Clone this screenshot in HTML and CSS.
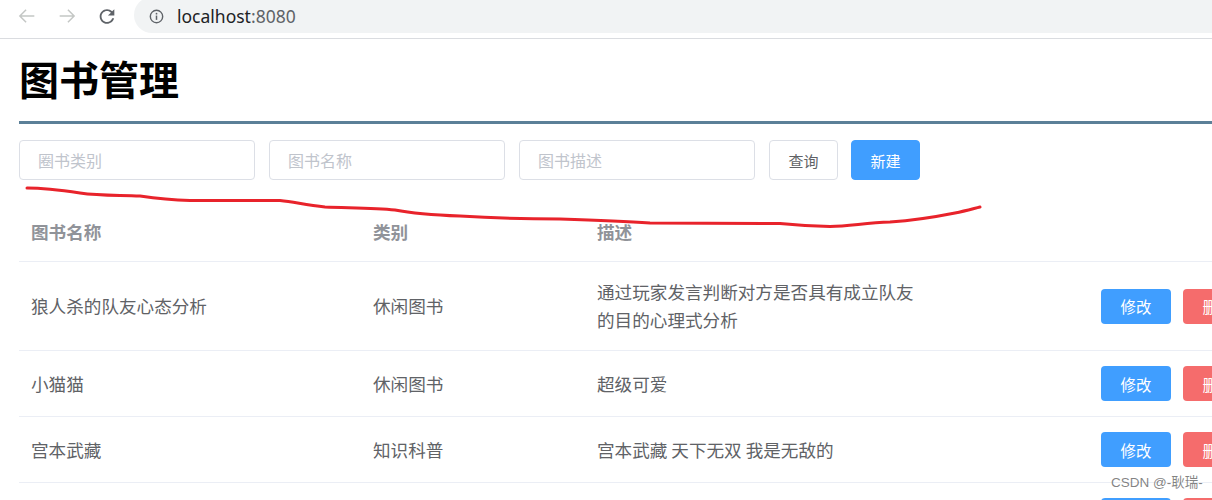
FILE: index.html
```html
<!DOCTYPE html>
<html lang="zh-CN">
<head>
<meta charset="utf-8">
<title>图书管理</title>
<link rel="stylesheet" href="styles.css">
</head>
<body>
<div class="browser-bar">
  <span class="nav-icon disabled">
    <svg viewBox="0 0 24 24" width="22" height="22"><path d="M20 12H4.5M11 5.2L4.2 12l6.8 6.8" fill="none" stroke="currentColor" stroke-width="1.6"/></svg>
  </span>
  <span class="nav-icon disabled">
    <svg viewBox="0 0 24 24" width="22" height="22"><path d="M4 12h15.5M13 5.2l6.8 6.8-6.8 6.8" fill="none" stroke="currentColor" stroke-width="1.6"/></svg>
  </span>
  <span class="nav-icon">
    <svg viewBox="0 0 24 24" width="23" height="23"><path fill="currentColor" d="M17.65 6.35C16.2 4.9 14.21 4 12 4c-4.42 0-7.99 3.58-7.99 8s3.57 8 7.99 8c3.73 0 6.84-2.55 7.73-6h-2.08c-.82 2.33-3.04 4-5.65 4-3.31 0-6-2.69-6-6s2.69-6 6-6c1.66 0 3.14.69 4.22 1.78L13 11h7V4l-2.35 2.35z"/></svg>
  </span>
  <div class="omnibox">
    <svg class="info" viewBox="0 0 16 16" width="15" height="15"><circle cx="8" cy="8" r="6.6" fill="none" stroke="currentColor" stroke-width="1.5"/><rect x="7.2" y="7" width="1.6" height="4.6" fill="currentColor"/><circle cx="8" cy="5" r="0.95" fill="currentColor"/></svg>
    <span class="url"><span class="host">localhost</span><span class="port">:8080</span></span>
  </div>
</div>

<main class="page">
  <header class="page-header">
    <h1 class="title">图书管理</h1>
  </header>

  <div class="toolbar">
    <input class="field" type="text" placeholder="圈书类别">
    <input class="field" type="text" placeholder="图书名称">
    <input class="field" type="text" placeholder="图书描述">
    <button class="btn btn-plain">查询</button>
    <button class="btn btn-primary">新建</button>
  </div>

  <table class="book-table">
    <colgroup>
      <col class="c-name"><col class="c-cat"><col class="c-desc"><col class="c-act">
    </colgroup>
    <thead>
      <tr><th>图书名称</th><th>类别</th><th>描述</th><th></th></tr>
    </thead>
    <tbody>
      <tr class="first-row">
        <td>狼人杀的队友心态分析</td>
        <td>休闲图书</td>
        <td><div class="desc">通过玩家发言判断对方是否具有成立队友的目的心理式分析</div></td>
        <td><div class="actions"><button class="act act-edit">修改</button><button class="act act-del">删除</button></div></td>
      </tr>
      <tr>
        <td>小猫猫</td>
        <td>休闲图书</td>
        <td><div class="desc">超级可爱</div></td>
        <td><div class="actions"><button class="act act-edit">修改</button><button class="act act-del">删除</button></div></td>
      </tr>
      <tr>
        <td>宫本武藏</td>
        <td>知识科普</td>
        <td><div class="desc">宫本武藏 天下无双 我是无敌的</div></td>
        <td><div class="actions"><button class="act act-edit">修改</button><button class="act act-del">删除</button></div></td>
      </tr>
      <tr>
        <td>&nbsp;</td>
        <td></td>
        <td></td>
        <td><div class="actions"><button class="act act-edit">修改</button><button class="act act-del">删除</button></div></td>
      </tr>
    </tbody>
  </table>
</main>

<svg class="scribble" viewBox="0 0 1212 500" width="1212" height="500">
  <path fill="none" stroke="#e8232b" stroke-width="3" stroke-linecap="round" stroke-linejoin="round"
    d="M27 188 C45 188 60 190 80 193 C100 196 120 195 140 196 C160 199 170 200 190 200.5 L280 200.5 C295 202 305 205 325 207 C350 208 375 208 395 210 C415 214 430 215 460 216 C490 218 520 219 560 219 C590 220 620 221 650 223 L780 223.5 C795 225 805 226 830 226.5 C850 226 865 223 890 222 C920 220 940 216 955 213 C965 211 972 209 980 207"/>
</svg>

<div class="watermark">CSDN @-耿瑞-</div>
</body>
</html>
```

FILE: styles.css
```css
html, body {
  margin: 0;
  padding: 0;
  background: #ffffff;
}

body {
  width: 1212px;
  height: 500px;
  overflow: hidden;
  position: relative;
  font-family: "Noto Sans CJK SC", "Noto Sans", sans-serif;
}

/* browser chrome */
.browser-bar {
  height: 39px;
  box-sizing: border-box;
  padding: 0 0 6px 16px;
  display: flex;
  align-items: center;
  border-bottom: 1px solid #dadce0;
  background: #ffffff;
}

.nav-icon {
  width: 22px;
  height: 22px;
  display: flex;
  align-items: center;
  justify-content: center;
  color: #5f6368;
  margin-right: 18px;
}

.nav-icon:nth-child(3) {
  margin-right: 16px;
}

.nav-icon.disabled {
  color: #c4c7c5;
}

.omnibox {
  align-self: flex-start;
  margin-top: -3px;
  height: 36px;
  flex: 1;
  background: #f1f3f4;
  border-radius: 18px 0 0 18px;
  display: flex;
  align-items: center;
  padding-left: 15px;
  gap: 13px;
}

.info {
  color: #5f6368;
  margin-top: 2px;
}

.url {
  font-family: "Noto Sans", "Open Sans", sans-serif;
  font-size: 17.5px;
  margin-top: 2px;
}

.host {
  color: #202124;
}

.port {
  color: #5f6368;
}

/* page */
.page {
  margin-left: 19px;
  width: 1270px;
}

.page-header {
  padding: 19px 0 23px;
  border-bottom: 3px solid #5b8098;
}

.title {
  margin: 0;
  font-size: 40px;
  line-height: 40px;
  font-weight: 700;
  color: #000000;
}

.toolbar {
  margin-top: 16px;
  display: flex;
  align-items: center;
  gap: 14px;
}

.field {
  width: 236px;
  height: 40px;
  box-sizing: border-box;
  border: 1px solid #dcdfe6;
  border-radius: 4px;
  padding: 0 18px;
  font-family: "Noto Sans CJK SC", sans-serif;
  font-size: 16px;
  color: #606266;
  outline: none;
}

.field::placeholder {
  color: #c0c4cc;
}

.btn {
  width: 69px;
  height: 40px;
  box-sizing: border-box;
  border-radius: 4px;
  font-family: "Noto Sans CJK SC", sans-serif;
  font-size: 15px;
  padding: 0;
  cursor: pointer;
}

.btn-plain {
  background: #ffffff;
  border: 1px solid #dcdfe6;
  color: #606266;
}

.btn-primary {
  background: #409eff;
  border: 1px solid #409eff;
  color: #ffffff;
  margin-left: -1px;
}

/* table */
.book-table {
  margin-top: 23px;
  width: 1270px;
  border-collapse: collapse;
  table-layout: fixed;
  font-size: 17.6px;
  line-height: 28px;
}

.c-name { width: 342px; }
.c-cat { width: 224px; }
.c-desc { width: 504px; }
.c-act { width: 200px; }

.book-table th,
.book-table td {
  padding: 15px 12px;
  border-bottom: 1px solid #ebeef5;
  text-align: left;
  vertical-align: middle;
}

.book-table th {
  color: #909399;
  font-weight: 700;
}

.book-table .first-row td {
  padding-top: 16px;
  padding-bottom: 16px;
}

.book-table td {
  color: #606266;
}

.desc {
  max-width: 325px;
}

.actions {
  display: flex;
  gap: 12px;
}

.act {
  width: 70px;
  height: 35px;
  border: none;
  border-radius: 4px;
  color: #ffffff;
  font-family: "Noto Sans CJK SC", sans-serif;
  font-size: 15.4px;
  padding: 0;
  flex: none;
}

.act-edit {
  background: #409eff;
}

.act-del {
  background: #f56c6c;
}

/* overlays */
.scribble {
  position: absolute;
  left: 0;
  top: 0;
  pointer-events: none;
}

.watermark {
  position: absolute;
  left: 1111px;
  top: 474px;
  font-family: "Liberation Sans", "Noto Sans CJK SC", sans-serif;
  font-size: 13.5px;
  line-height: 18px;
  color: rgba(90, 90, 90, 0.75);
  pointer-events: none;
}
```
